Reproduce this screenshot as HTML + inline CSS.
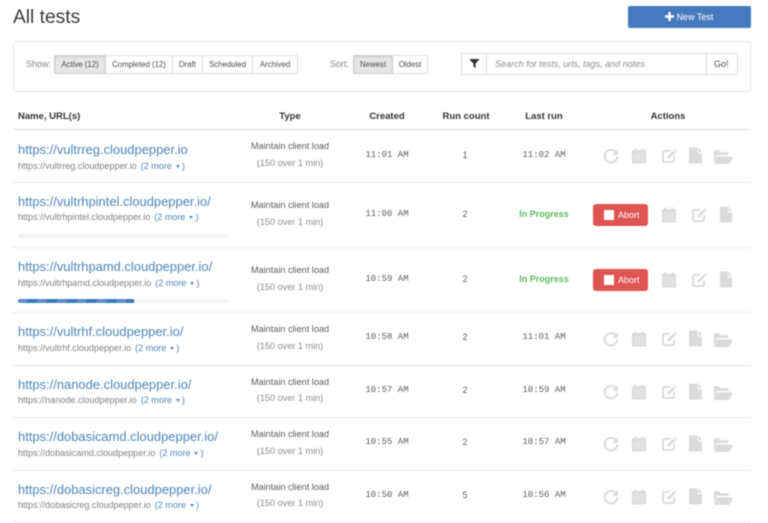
<!DOCTYPE html>
<html><head><meta charset="utf-8"><style>
html{margin:0;padding:0;background:#fff}
*{box-sizing:border-box}
body{margin:0;padding:0;background:#fff;width:768px;height:523px;position:relative;overflow:hidden;font-family:"Liberation Sans",sans-serif;color:#333;filter:blur(.4px)}
.a{position:absolute;white-space:pre;line-height:12px}
.t{position:absolute;left:18px;font-size:12.95px;line-height:16px;color:#4f84ba;white-space:pre}
.s{position:absolute;left:18px;font-size:9.05px;line-height:12px;color:#808080;white-space:pre}
.s b{font-weight:normal;color:#4f84ba;margin-left:4px}
.s i{display:inline-block;width:0;height:0;border:2.5px solid transparent;border-top:3px solid #4f84ba;border-bottom:0;margin-left:4px;vertical-align:1px}
.s u{text-decoration:none;color:#4f84ba;margin-left:2px}
.ty{position:absolute;left:230px;width:120px;text-align:center;font-size:9.15px;line-height:12px;color:#5c5c5c}
.ty2{color:#8c8c8c}
.m{position:absolute;font-family:"Liberation Mono",monospace;font-size:9px;line-height:12px;color:#5c5c5c;white-space:pre;text-align:center;width:80px}
.c{position:absolute;left:425px;width:80px;text-align:center;font-size:9px;line-height:12px;color:#5c5c5c}
.ip{position:absolute;left:504px;width:80px;text-align:center;font-size:9px;line-height:12px;font-weight:bold;color:#5cb85c}
.l{position:absolute;left:13px;width:738px;height:1px;background:#e8e8e8}
.h{position:absolute;top:111px;font-size:9.5px;line-height:12px;font-weight:bold;color:#333;text-align:center;white-space:pre}
.btn{position:absolute;top:55px;height:19px;border:1px solid #ddd;border-left:0;font-size:7.8px;line-height:17px;text-align:center;color:#4c4c4c;background:#fff}
.on{background:#e6e6e6;border-color:#ccc;box-shadow:inset 0 1px 2px rgba(0,0,0,.12)}
.pb{position:absolute;left:18px;width:211px;height:4px;background:#f2f2f2;border-radius:2px;overflow:hidden}
.pb div{height:4px;width:116px;background:#3a7ab8;background-image:repeating-linear-gradient(115deg,rgba(255,255,255,.16) 0 9px,transparent 9px 18px)}
.ab{position:absolute;left:593px;width:55px;height:22px;background:#de5553;border-radius:3px;color:#fff;font-size:9px;line-height:22px;padding-left:25px}
.ab i{position:absolute;left:11px;top:6px;width:10px;height:10px;background:#fff}
svg.i{position:absolute;fill:#dadada}
</style></head><body>
<svg width="0" height="0" style="position:absolute"><defs>
<symbol id="r" viewBox="0 0 16 16"><path d="M13 4.300A6.300 6.300 0 1 0 14.300 8.500" fill="none" stroke="#dadada" stroke-width="2"/><path d="M15 1v5.800H9.200z"/></symbol>
<symbol id="k" viewBox="0 0 16 16" preserveAspectRatio="none"><path d="M1 2h2.500V.5h2V2h5V.5h2V2H15v13.500H1z"/><path d="M2 5.500h12M2 8h12M2 10.500h12M2 13h12M4.800 5.500v8M8 5.500v8M11.200 5.500v8" stroke="#f1f1f1" stroke-width=".6" fill="none"/></symbol>
<symbol id="e" viewBox="0 0 16 16"><path d="M3.500 2H10L8.200 3.900H3.600c-.4 0-.7.3-.7.7v7.800c0 .4.300.7.700.7h7.800c.4 0 .7-.3.700-.7V9l1.900-1.900v5.400c0 1.400-1.100 2.500-2.500 2.500H3.500A2.500 2.500 0 0 1 1 12.500v-8A2.500 2.500 0 0 1 3.500 2zM6.500 8.500 12.600 2.400l1.900 1.900-6.100 6.100H6.500zM13.300 1.700l.8-.7 1.900 1.900-.8.800z"/></symbol>
<symbol id="f" viewBox="0 0 16 16" preserveAspectRatio="none"><path d="M2 .5h7.500v5.500H14v8a1.500 1.500 0 0 1-1.500 1.500h-10A1.500 1.500 0 0 1 1 14V1.500A1 1 0 0 1 2 .5zM10.300.5 14 4.800h-3.700z"/></symbol>
<symbol id="o" viewBox="0 0 22 16" preserveAspectRatio="none"><path d="M1 13V3.500A1.500 1.500 0 0 1 2.500 2h4l1.500 2h7.500A1.500 1.500 0 0 1 17 5.500V6.500H6a3 3 0 0 0-2.600 1.500zM5 8h15.500c.9 0 1.300.8.900 1.500L18.500 14a2 2 0 0 1-1.700 1H2.200c-.9 0-1.300-.8-.9-1.500L3.300 9A2 2 0 0 1 5 8z"/></symbol>
</defs></svg>

<div class="a" style="left:13px;top:6px;font-size:19.2px;line-height:24px;color:#3a3a3a">All tests</div>
<div class="a" style="left:628px;top:6px;width:123px;height:22px;background:#4679bd;border-radius:2px;color:#fff;font-size:9px;line-height:22px;text-align:center"><svg width="9" height="9" viewBox="0 0 9 9" style="vertical-align:-1px;margin-right:3px;margin-left:-1px"><path d="M3.300 0h2.400v3.300H9v2.400H5.700V9H3.300V5.700H0V3.300h3.300z" fill="#fff"/></svg>New Test</div>

<div class="a" style="left:13px;top:41px;width:738px;height:51px;border:1px solid #e6e6e6;border-radius:3px"></div>
<div class="a" style="left:26px;top:58px;font-size:9px;color:#808080">Show:</div>
<div class="btn on" style="left:54px;width:52px;border-left:1px solid #ccc;border-radius:2px 0 0 2px">Active (12)</div>
<div class="btn" style="left:106px;width:67px">Completed (12)</div>
<div class="btn" style="left:173px;width:30px">Draft</div>
<div class="btn" style="left:203px;width:50px">Scheduled</div>
<div class="btn" style="left:253px;width:45px;border-radius:0 2px 2px 0">Archived</div>
<div class="a" style="left:330px;top:58px;font-size:9px;color:#808080">Sort:</div>
<div class="btn on" style="left:353px;width:40px;border-left:1px solid #ccc;border-radius:2px 0 0 2px">Newest</div>
<div class="btn" style="left:393px;width:35px;border-radius:0 2px 2px 0">Oldest</div>
<div class="a" style="left:461px;top:53px;width:277px;height:22px;border:1px solid #ddd;border-radius:2px"></div>
<div class="a" style="left:486px;top:53px;width:1px;height:22px;background:#ddd"></div>
<div class="a" style="left:706px;top:53px;width:1px;height:22px;background:#ddd"></div>
<svg class="i" style="left:470px;top:59px;fill:#333" width="9" height="9" viewBox="0 0 9 9"><path d="M0 0h9v1L5.600 4.500V9L3.400 7.500v-3L0 1z"/></svg>
<div class="a" style="left:495px;top:58px;font-size:9.05px;font-style:italic;color:#8c8c8c">Search for tests, urls, tags, and notes</div>
<div class="a" style="left:714px;top:58px;font-size:9px;color:#4c4c4c">Go!</div>

<div class="h" style="left:18px">Name, URL(s)</div>
<div class="h" style="left:250px;width:80px">Type</div>
<div class="h" style="left:347px;width:80px">Created</div>
<div class="h" style="left:426px;width:80px">Run count</div>
<div class="h" style="left:504px;width:80px">Last run</div>
<div class="h" style="left:628px;width:80px">Actions</div>
<div class="l" style="top:129px;background:#ddd"></div>

<!-- row 1 -->
<div class="t" style="top:142px">https://vultrreg.cloudpepper.io</div>
<div class="s" style="top:160px">https://vultrreg.cloudpepper.io<b>(2 more</b><i></i><u>)</u></div>
<div class="ty" style="top:140px">Maintain client load</div><div class="ty ty2" style="top:157px">(150 over 1 min)</div>
<div class="m" style="left:347px;top:149px">11:01 AM</div><div class="c" style="top:149px">1</div><div class="m" style="left:504px;top:149px">11:02 AM</div>
<svg class="i" style="left:603px;top:148px" width="16" height="16"><use href="#r"/></svg><svg class="i" style="left:631px;top:148px" width="16" height="16"><use href="#k"/></svg><svg class="i" style="left:661px;top:148px" width="16" height="16"><use href="#e"/></svg><svg class="i" style="left:688px;top:147px" width="16" height="17"><use href="#f"/></svg><svg class="i" style="left:713px;top:148px" width="20" height="17"><use href="#o"/></svg>
<div class="l" style="top:182px"></div>

<!-- row 2 -->
<div class="t" style="top:194px">https://vultrhpintel.cloudpepper.io/</div>
<div class="s" style="top:211px">https://vultrhpintel.cloudpepper.io<b>(2 more</b><i></i><u>)</u></div>
<div class="pb" style="top:234px"><div style="width:0"></div></div>
<div class="ty" style="top:199px">Maintain client load</div><div class="ty ty2" style="top:216px">(150 over 1 min)</div>
<div class="m" style="left:347px;top:208px">11:00 AM</div><div class="c" style="top:208px">2</div><div class="ip" style="top:208px">In Progress</div>
<div class="ab" style="top:204px"><i></i>Abort</div>
<svg class="i" style="left:661px;top:207px" width="16" height="16"><use href="#k"/></svg><svg class="i" style="left:691px;top:207px" width="16" height="16"><use href="#e"/></svg><svg class="i" style="left:719px;top:206px" width="15" height="17"><use href="#f"/></svg>
<div class="l" style="top:247px"></div>

<!-- row 3 -->
<div class="t" style="top:259px">https://vultrhpamd.cloudpepper.io/</div>
<div class="s" style="top:277px">https://vultrhpamd.cloudpepper.io<b>(2 more</b><i></i><u>)</u></div>
<div class="pb" style="top:299px"><div></div></div>
<div class="ty" style="top:264px">Maintain client load</div><div class="ty ty2" style="top:281px">(150 over 1 min)</div>
<div class="m" style="left:347px;top:273px">10:59 AM</div><div class="c" style="top:273px">2</div><div class="ip" style="top:273px">In Progress</div>
<div class="ab" style="top:269px"><i></i>Abort</div>
<svg class="i" style="left:661px;top:272px" width="16" height="16"><use href="#k"/></svg><svg class="i" style="left:691px;top:272px" width="16" height="16"><use href="#e"/></svg><svg class="i" style="left:719px;top:271px" width="15" height="17"><use href="#f"/></svg>
<div class="l" style="top:312px"></div>

<!-- row 4 -->
<div class="t" style="top:324px">https://vultrhf.cloudpepper.io/</div>
<div class="s" style="top:342px">https://vultrhf.cloudpepper.io<b>(2 more</b><i></i><u>)</u></div>
<div class="ty" style="top:323px">Maintain client load</div><div class="ty ty2" style="top:340px">(150 over 1 min)</div>
<div class="m" style="left:347px;top:331px">10:58 AM</div><div class="c" style="top:331px">2</div><div class="m" style="left:504px;top:331px">11:01 AM</div>
<svg class="i" style="left:603px;top:331px" width="16" height="16"><use href="#r"/></svg><svg class="i" style="left:631px;top:331px" width="16" height="16"><use href="#k"/></svg><svg class="i" style="left:661px;top:331px" width="16" height="16"><use href="#e"/></svg><svg class="i" style="left:688px;top:330px" width="16" height="17"><use href="#f"/></svg><svg class="i" style="left:713px;top:331px" width="20" height="17"><use href="#o"/></svg>
<div class="l" style="top:365px"></div>

<!-- row 5 -->
<div class="t" style="top:377px">https://nanode.cloudpepper.io/</div>
<div class="s" style="top:394px">https://nanode.cloudpepper.io<b>(2 more</b><i></i><u>)</u></div>
<div class="ty" style="top:376px">Maintain client load</div><div class="ty ty2" style="top:392px">(150 over 1 min)</div>
<div class="m" style="left:347px;top:384px">10:57 AM</div><div class="c" style="top:384px">2</div><div class="m" style="left:504px;top:384px">10:59 AM</div>
<svg class="i" style="left:603px;top:384px" width="16" height="16"><use href="#r"/></svg><svg class="i" style="left:631px;top:384px" width="16" height="16"><use href="#k"/></svg><svg class="i" style="left:661px;top:384px" width="16" height="16"><use href="#e"/></svg><svg class="i" style="left:688px;top:383px" width="16" height="17"><use href="#f"/></svg><svg class="i" style="left:713px;top:384px" width="20" height="17"><use href="#o"/></svg>
<div class="l" style="top:417px"></div>

<!-- row 6 -->
<div class="t" style="top:429px">https://dobasicamd.cloudpepper.io/</div>
<div class="s" style="top:447px">https://dobasicamd.cloudpepper.io<b>(2 more</b><i></i><u>)</u></div>
<div class="ty" style="top:428px">Maintain client load</div><div class="ty ty2" style="top:445px">(150 over 1 min)</div>
<div class="m" style="left:347px;top:436px">10:55 AM</div><div class="c" style="top:436px">2</div><div class="m" style="left:504px;top:436px">10:57 AM</div>
<svg class="i" style="left:603px;top:436px" width="16" height="16"><use href="#r"/></svg><svg class="i" style="left:631px;top:436px" width="16" height="16"><use href="#k"/></svg><svg class="i" style="left:661px;top:436px" width="16" height="16"><use href="#e"/></svg><svg class="i" style="left:688px;top:435px" width="16" height="17"><use href="#f"/></svg><svg class="i" style="left:713px;top:436px" width="20" height="17"><use href="#o"/></svg>
<div class="l" style="top:470px"></div>

<!-- row 7 -->
<div class="t" style="top:482px">https://dobasicreg.cloudpepper.io/</div>
<div class="s" style="top:499px">https://dobasicreg.cloudpepper.io<b>(2 more</b><i></i><u>)</u></div>
<div class="ty" style="top:481px">Maintain client load</div><div class="ty ty2" style="top:497px">(150 over 1 min)</div>
<div class="m" style="left:347px;top:489px">10:50 AM</div><div class="c" style="top:489px">5</div><div class="m" style="left:504px;top:489px">10:56 AM</div>
<svg class="i" style="left:603px;top:489px" width="16" height="16"><use href="#r"/></svg><svg class="i" style="left:631px;top:489px" width="16" height="16"><use href="#k"/></svg><svg class="i" style="left:661px;top:489px" width="16" height="16"><use href="#e"/></svg><svg class="i" style="left:688px;top:488px" width="16" height="17"><use href="#f"/></svg><svg class="i" style="left:713px;top:489px" width="20" height="17"><use href="#o"/></svg>
<div class="l" style="top:522px"></div>
</body></html>
